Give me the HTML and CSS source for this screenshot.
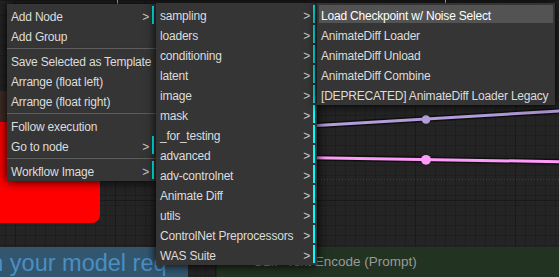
FILE: index.html
```html
<!DOCTYPE html>
<html>
<head>
<meta charset="utf-8">
<link rel="stylesheet" href="styles.css">
</head>
<body>
<div class="canvas">
  <div class="node red-node">
    <div class="red-title"></div>
    <div class="red-body"></div>
  </div>
  <div class="node note-node"><span class="note-text">in your model req</span></div>
  <div class="node clip-node"><span class="clip-title">CLIP Text Encode (Prompt)</span></div>

  <svg class="links" width="559" height="277" viewBox="0 0 559 277">
    <line x1="117.5" y1="0" x2="117.5" y2="4" stroke="#bdbdbd" stroke-width="1"/>
    <line x1="445.5" y1="0" x2="445.5" y2="4" stroke="#e0e0e0" stroke-width="1"/>
    <line x1="300" y1="179.5" x2="559" y2="179.5" stroke="#2e4152" stroke-width="1" stroke-dasharray="1 2"/>
    <line x1="140" y1="136.1" x2="560" y2="111" stroke="#000" stroke-opacity="0.55" stroke-width="6"/>
    <line x1="140" y1="136.1" x2="560" y2="111" stroke="#b39ddb" stroke-width="3"/>
    <line x1="140" y1="154.8" x2="560" y2="161.7" stroke="#000" stroke-opacity="0.55" stroke-width="6"/>
    <line x1="140" y1="154.8" x2="560" y2="161.7" stroke="#ff9cf9" stroke-width="3"/>
    <circle cx="426" cy="119.5" r="4.3" fill="#b39ddb"/>
    <circle cx="426" cy="159.8" r="4.9" fill="#ff9cf9"/>
  </svg>

  <div class="menu menu-main">
    <div class="entry sub"><span>Add Node</span><span class="arrow">&gt;</span></div>
    <div class="entry"><span>Add Group</span></div>
    <div class="sep"></div>
    <div class="entry"><span>Save Selected as Template</span></div>
    <div class="entry"><span>Arrange (float left)</span></div>
    <div class="entry"><span>Arrange (float right)</span></div>
    <div class="sep"></div>
    <div class="entry"><span>Follow execution</span></div>
    <div class="entry sub"><span>Go to node</span><span class="arrow">&gt;</span></div>
    <div class="sep"></div>
    <div class="entry sub"><span>Workflow Image</span><span class="arrow">&gt;</span></div>
  </div>

  <div class="menu menu-cat">
    <div class="entry sub"><span>sampling</span><span class="arrow">&gt;</span></div>
    <div class="entry sub"><span>loaders</span><span class="arrow">&gt;</span></div>
    <div class="entry sub"><span>conditioning</span><span class="arrow">&gt;</span></div>
    <div class="entry sub"><span>latent</span><span class="arrow">&gt;</span></div>
    <div class="entry sub"><span>image</span><span class="arrow">&gt;</span></div>
    <div class="entry sub"><span>mask</span><span class="arrow">&gt;</span></div>
    <div class="entry sub"><span>_for_testing</span><span class="arrow">&gt;</span></div>
    <div class="entry sub"><span>advanced</span><span class="arrow">&gt;</span></div>
    <div class="entry sub"><span>adv-controlnet</span><span class="arrow">&gt;</span></div>
    <div class="entry sub"><span>Animate Diff</span><span class="arrow">&gt;</span></div>
    <div class="entry sub"><span>utils</span><span class="arrow">&gt;</span></div>
    <div class="entry sub"><span>ControlNet Preprocessors</span><span class="arrow">&gt;</span></div>
    <div class="entry sub"><span>WAS Suite</span><span class="arrow">&gt;</span></div>
  </div>

  <div class="menu menu-nodes">
    <div class="entry hover"><span>Load Checkpoint w/ Noise Select</span></div>
    <div class="entry"><span>AnimateDiff Loader</span></div>
    <div class="entry"><span>AnimateDiff Unload</span></div>
    <div class="entry"><span>AnimateDiff Combine</span></div>
    <div class="entry"><span>[DEPRECATED] AnimateDiff Loader Legacy</span></div>
  </div>
</div>
</body>
</html>
```

FILE: styles.css
```css
html, body {
  margin: 0;
  padding: 0;
  background: #222;
}

.canvas {
  position: relative;
  width: 559px;
  height: 277px;
  overflow: hidden;
  background-color: #242424;
  background-image:
    linear-gradient(90deg, #1a1a1a 1px, transparent 1px),
    linear-gradient(#1a1a1a 1px, transparent 1px),
    linear-gradient(90deg, #1e1e1e 1px, transparent 1px),
    linear-gradient(#1e1e1e 1px, transparent 1px);
  background-size: 100px 100px, 100px 100px, 10px 10px, 10px 10px;
  background-position: 15px 0, 0 0, 5px 0, 0 5px;
  font-family: "Liberation Sans", Arial, sans-serif;
}

.node {
  position: absolute;
}

.red-node {
  left: -40px;
  top: 91px;
  width: 140px;
  display: flex;
  flex-direction: column;
}

.red-title {
  height: 31px;
  background: #3e2b27;
}

.red-body {
  height: 101px;
  background: #ff0000;
  border-bottom-right-radius: 8px;
}

.note-node {
  left: -20px;
  top: 247px;
  width: 208px;
  height: 30px;
  padding: 1px 0 0 5px;
  box-sizing: border-box;
  background: #33566f;
  overflow: hidden;
  white-space: nowrap;
}

.note-text {
  font-size: 23.5px;
  line-height: 30px;
  color: #4a8fc4;
}

.clip-node {
  left: 217px;
  top: 247px;
  width: 400px;
  height: 30px;
  padding-left: 36px;
  box-sizing: border-box;
  background: #223322;
  white-space: nowrap;
}

.clip-title {
  font-size: 13.5px;
  line-height: 30px;
  color: #9a9a9a;
}

.links {
  position: absolute;
  left: 0;
  top: 0;
}

.menu {
  position: absolute;
  background: #353535;
  box-shadow: 0 0 10px #000;
  font-size: 12px;
  color: #dcdcdc;
}

.menu-main {
  left: 7px;
  top: 4px;
  width: 149px;
  z-index: 1;
}

.menu-cat {
  left: 156px;
  top: 3px;
  width: 161px;
  z-index: 2;
}

.menu-nodes {
  left: 317px;
  top: 3px;
  width: 238px;
  z-index: 3;
}

.entry {
  margin: 2px;
  height: 16px;
  padding-top: 2px;
  line-height: 18px;
  padding-left: 2px;
  display: flex;
  justify-content: space-between;
  white-space: nowrap;
  letter-spacing: -0.2px;
}

.entry.sub {
  border-right: 2px solid #00ffff;
}

.arrow {
  padding-right: 3px;
  color: #cccccc;
}

.entry.hover {
  background: #535353;
  color: #ffffff;
}

.sep {
  height: 0;
  margin: 3px 0 2px 0;
  border-top: 1px solid #333;
  border-bottom: 1px solid #5e5e5e;
}
```
